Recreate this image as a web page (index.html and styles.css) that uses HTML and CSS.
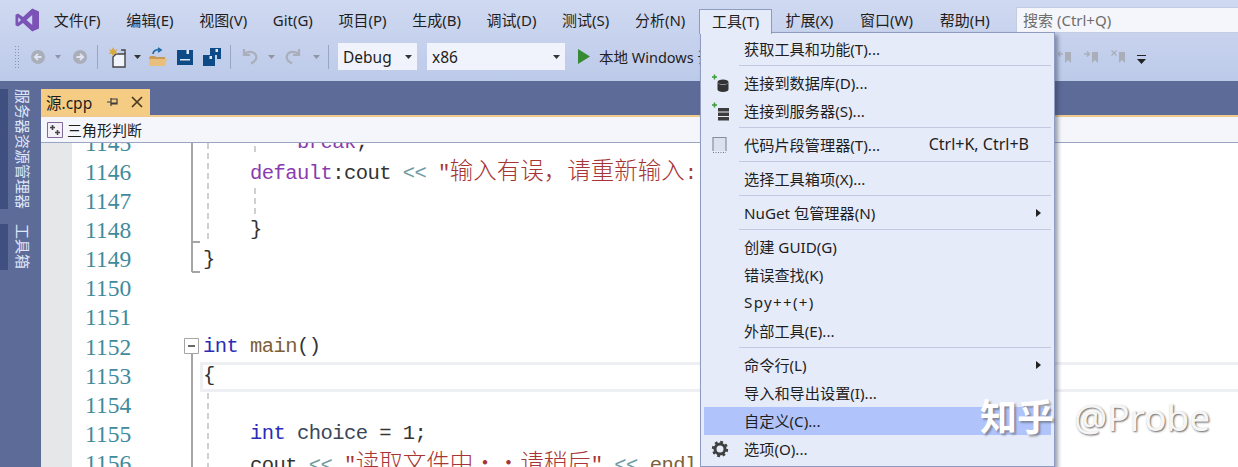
FILE: index.html
```html
<!DOCTYPE html>
<html lang="zh-CN">
<head>
<meta charset="utf-8">
<title>Visual Studio</title>
<link rel="stylesheet" href="styles.css">
</head>
<body>
<div class="app">
  <div class="chrome">
    <header class="menubar">
      <svg class="logo" width="24" height="24" viewBox="0 0 24 24"><path fill="#7b52b5" fill-rule="evenodd" d="M17.2 0.500 L24 3.600 V20.400 L17.200 23.500 L8 14.900 L3 18.600 L0.500 17.300 V6.700 L3 5.400 L8 9.100 Z M17.200 7 L11.600 12 L17.200 17 Z M3.200 9.200 V14.800 L6 12 Z"/></svg>
      <nav class="menus">
        <span class="menu">文件(F)</span>
        <span class="menu">编辑(E)</span>
        <span class="menu">视图(V)</span>
        <span class="menu">Git(G)</span>
        <span class="menu">项目(P)</span>
        <span class="menu">生成(B)</span>
        <span class="menu">调试(D)</span>
        <span class="menu">测试(S)</span>
        <span class="menu">分析(N)</span>
        <span class="menu menu-active">工具(T)</span>
        <span class="menu">扩展(X)</span>
        <span class="menu">窗口(W)</span>
        <span class="menu">帮助(H)</span>
      </nav>
      <div class="search">搜索 (Ctrl+Q)</div>
    </header>
    <div class="toolbar">
      <span class="grip"></span>
      <svg class="m9" width="16" height="16" viewBox="0 0 16 16"><circle cx="8" cy="8" r="7" fill="#a9aeb9"/><path d="M11.500 8H5M8 4.800 4.800 8 8 11.200" fill="none" stroke="#dfe5f4" stroke-width="1.800"/></svg>
      <svg class="m9" width="6" height="4" viewBox="0 0 6 4"><path d="M0 0h6L3 4z" fill="#8f95a5"/></svg>
      <svg class="m11" width="16" height="16" viewBox="0 0 16 16"><circle cx="8" cy="8" r="7" fill="#a9aeb9"/><path d="M4.500 8H11M8 4.800 11.200 8 8 11.200" fill="none" stroke="#dfe5f4" stroke-width="1.800"/></svg>
      <span class="tsep m9"></span>
      <svg class="m10" width="20" height="22" viewBox="0 0 20 22"><path d="M8 8h9v13H5V11z" fill="#f2f4fb" stroke="#444" stroke-width="1.400"/><path d="M5 1l1.500 3L10 3 7.600 5.600 10 8 6.600 7.400 5 10.500 3.600 7.400 0.500 8 2.800 5.600 0.700 3l3.100 1z" fill="#d9a93f"/><path d="M13 4h4v4" fill="none" stroke="#444" stroke-width="1.400"/></svg>
      <svg class="m6" width="7" height="4" viewBox="0 0 7 4"><path d="M0 0h7L3.500 4z" fill="#333"/></svg>
      <svg class="m7" width="20" height="20" viewBox="0 0 20 20"><path d="M1 10h6l1 2h11l-2 7H1z" fill="#e9bf7e"/><path d="M2 9h5l1 1h9v2H1z" fill="#c99a56"/><path d="M5 7c0-3 3-5 7-4M10 1l3 2-3 2" fill="none" stroke="#1f6aa8" stroke-width="1.600"/></svg>
      <svg class="m9" width="16" height="16" viewBox="0 0 16 16"><path d="M0 1h16v15H0z" fill="#0e4a86"/><path d="M9.500 1h2.500v4H9.500zM3 10h10v1.500H3z" fill="#dfe6f6"/></svg>
      <svg class="m10" width="18" height="18" viewBox="0 0 18 18"><path d="M7 0h11v11H14V7H7z" fill="#0e4a86"/><path d="M12.500 1h2.500v3h-2.500z" fill="#dfe6f6"/><path d="M0 7h12v11H0z" fill="#0e4a86"/><path d="M6.500 8h2.500v3H6.500z" fill="#dfe6f6"/></svg>
      <span class="tsep m9"></span>
      <svg class="m10" width="17" height="17" viewBox="0 0 17 17"><path d="M3 1v6h6M3.500 6.500C6 3 13 2.500 15 7.500c1 3-1 6-5 8" fill="none" stroke="#a9aeb9" stroke-width="2.200"/></svg>
      <svg class="m10" width="7" height="4" viewBox="0 0 7 4"><path d="M0 0h7L3.500 4z" fill="#8f95a5"/></svg>
      <svg class="m10" width="17" height="17" viewBox="0 0 17 17"><path d="M14 1v6H8M13.500 6.500C11 3 4 2.500 2 7.500c-1 3 1 6 5 8" fill="none" stroke="#a9aeb9" stroke-width="2.200"/></svg>
      <svg class="m11" width="7" height="4" viewBox="0 0 7 4"><path d="M0 0h7L3.500 4z" fill="#8f95a5"/></svg>
      <span class="tsep m8"></span>
      <div class="combo combo-config m9"><span>Debug</span><svg width="7" height="4" viewBox="0 0 7 4"><path d="M0 0h7L3.500 4z" fill="#333"/></svg></div>
      <div class="combo combo-platform m10"><span>x86</span><svg width="7" height="4" viewBox="0 0 7 4"><path d="M0 0h7L3.500 4z" fill="#333"/></svg></div>
      <svg class="m13" width="12" height="15" viewBox="0 0 12 15"><path d="M0 0l12 7.500L0 15z" fill="#388a34"/></svg>
      <span class="run-label m9">本地 Windows 调试器</span>
      <div class="bookmarks">
        <svg width="14" height="14" viewBox="0 0 14 14"><path d="M7 2h6v11l-3-3-3 3z" fill="#a9aeb9"/><path d="M5 4H0M2.500 1.500 0 4l2.500 2.500" fill="none" stroke="#a9aeb9" stroke-width="1.300"/></svg>
        <svg class="m12" width="15" height="14" viewBox="0 0 15 14"><path d="M8 2h6v11l-3-3-3 3z" fill="#a9aeb9"/><path d="M0 4h5M3 1.500 5.500 4 3 6.500" fill="none" stroke="#a9aeb9" stroke-width="1.300"/></svg>
        <svg class="m12" width="15" height="14" viewBox="0 0 15 14"><path d="M8 2h6v11l-3-3-3 3z" fill="#a9aeb9"/><path d="M0.500 0.500l5 5M5.500 0.500l-5 5" fill="none" stroke="#a9aeb9" stroke-width="1.200"/></svg>
        <svg class="overflow-btn" width="9" height="9" viewBox="0 0 9 9"><path d="M0 0.500h9" stroke="#222" stroke-width="1"/><path d="M0 4h9L4.500 9z" fill="#222"/></svg>
      </div>
    </div>
  </div>

  <div class="workspace">
    <aside class="sidebar">
      <div class="sidetab sidetab-server">服务器资源管理器</div>
      <div class="sidetab sidetab-tools">工具箱</div>
    </aside>
    <main class="docwell">
      <div class="tabstrip">
        <div class="doctab">
          <span class="doctab-name">源.cpp</span>
          <svg class="pin" width="12" height="10" viewBox="0 0 12 10"><path d="M0 5h4M4 1v8M4 2h6v5H4M4 6h6" fill="none" stroke="#3d3d3d" stroke-width="1.200"/></svg>
          <svg class="close" width="12" height="12" viewBox="0 0 12 12"><path d="M1 1l10 10M11 1L1 11" stroke="#4a3a20" stroke-width="1.700"/></svg>
        </div>
      </div>
      <div class="navbar">
        <svg width="16" height="16" viewBox="0 0 16 16"><path d="M0.500 0.500h15v15H0.500z" fill="#f4f0f8" stroke="#7f6a98"/><path d="M3 5.500h5M5.500 3v5" stroke="#444" stroke-width="1.600"/><path d="M8 10.500h5M10.500 8v5" stroke="#444" stroke-width="1.600"/></svg>
        <span>三角形判断</span>
      </div>
      <div class="editor">
        <div class="gutter"></div>
        <div class="lines">
          <div class="line"><span class="ln">1145</span><code class="code">        <i class="kw2">break</i>;</code></div>
          <div class="line"><span class="ln">1146</span><code class="code">    <i class="kw2">default</i>:cout <i class="op">&lt;&lt;</i> <i class="str">"<b>输入有误，请重新输入</b>:</i></code></div>
          <div class="line"><span class="ln">1147</span></div>
          <div class="line"><span class="ln">1148</span><code class="code">    }</code></div>
          <div class="line"><span class="ln">1149</span><code class="code">}</code></div>
          <div class="line"><span class="ln">1150</span></div>
          <div class="line"><span class="ln">1151</span></div>
          <div class="line"><span class="ln">1152</span><code class="code"><i class="kw">int</i> <i class="fn">main</i>()</code></div>
          <div class="line line-current"><span class="ln">1153</span><code class="code">{</code></div>
          <div class="line"><span class="ln">1154</span></div>
          <div class="line"><span class="ln">1155</span><code class="code">    <i class="kw">int</i> <i class="var">choice</i> = 1;</code></div>
          <div class="line"><span class="ln">1156</span><code class="code">    cout <i class="op">&lt;&lt;</i> <i class="str">"<b>读取文件中・・请稍后</b>"</i> <i class="op">&lt;&lt;</i> <i class="fn">endl</i></code></div>
        </div>
        <svg class="outlining" width="70" height="324" viewBox="0 0 70 324">
          <path d="M1 0V129M1 99H9M1 129H9M1 211V324" fill="none" stroke="#a5a5a5" stroke-width="2"/>
          <path d="M17 0V100M17 250V324M64 3V11M64 45V72" fill="none" stroke="#cfcfcf" stroke-width="2" stroke-dasharray="6 4"/>
          <path d="M-6.500 195.500h14v15h-14z" fill="#fff" stroke="#a5a5a5"/>
          <path d="M-3 203h7" stroke="#444" stroke-width="1.600"/>
        </svg>
      </div>
    </main>
  </div>

  <section class="dropdown">
    <div class="item"><span>获取工具和功能(T)...</span></div>
    <div class="msep"></div>
    <div class="item">
      <svg class="micon" width="22" height="20" viewBox="0 0 22 20"><path d="M3 4h5M5.500 1.500v5" stroke="#3f9a3a" stroke-width="1.500"/><ellipse cx="14" cy="9" rx="5.500" ry="2.500" fill="#333"/><path d="M8.500 9.500v7c0 1.500 2.500 2.500 5.500 2.500s5.500-1 5.500-2.500v-7c-1 1.500-3 2.500-5.500 2.500s-4.500-1-5.500-2.500z" fill="#333"/></svg>
      <span>连接到数据库(D)...</span>
    </div>
    <div class="item">
      <svg class="micon" width="22" height="20" viewBox="0 0 22 20"><path d="M3 4h5M5.500 1.500v5" stroke="#3f9a3a" stroke-width="1.500"/><path d="M9 7h11v3.500H9zM9 11.500h11V15H9zM9 16h11v3.500H9z" fill="#3c3c3c"/></svg>
      <span>连接到服务器(S)...</span>
    </div>
    <div class="msep"></div>
    <div class="item">
      <svg class="micon" width="22" height="18" viewBox="0 0 22 18"><path d="M4 15V1.500h13V15" fill="#dde1ee" stroke="#8a8f9f" stroke-width="1.200"/><path d="M4 16.500h13" stroke="#6f7485" stroke-dasharray="1 1.500"/></svg>
      <span>代码片段管理器(T)...</span><span class="shortcut">Ctrl+K, Ctrl+B</span>
    </div>
    <div class="msep"></div>
    <div class="item"><span>选择工具箱项(X)...</span></div>
    <div class="msep"></div>
    <div class="item"><span>NuGet 包管理器(N)</span><i class="arrow"></i></div>
    <div class="msep"></div>
    <div class="item"><span>创建 GUID(G)</span></div>
    <div class="item"><span>错误查找(K)</span></div>
    <div class="item"><span class="spy">Spy++(+)</span></div>
    <div class="item"><span>外部工具(E)...</span></div>
    <div class="msep"></div>
    <div class="item"><span>命令行(L)</span><i class="arrow"></i></div>
    <div class="item"><span>导入和导出设置(I)...</span></div>
    <div class="item item-hover"><span>自定义(C)...</span></div>
    <div class="item">
      <svg class="micon" width="22" height="18" viewBox="0 0 22 18"><circle cx="11" cy="9" r="5" fill="none" stroke="#404040" stroke-width="3"/><circle cx="11" cy="9" r="7" fill="none" stroke="#404040" stroke-width="2.400" stroke-dasharray="2.750 2.750"/></svg>
      <span>选项(O)...</span>
    </div>
  </section>

  <div class="watermark"><b>知乎</b><span>@Probe</span></div>
</div>
</body>
</html>
```
FILE: styles.css
```css
* { box-sizing: border-box; }
html, body { margin: 0; padding: 0; }
body {
  width: 1238px;
  height: 467px;
  overflow: hidden;
  font-family: "Noto Sans", "Noto Sans CJK SC", sans-serif;
  font-size: 15px;
  color: #1e1e1e;
}
svg { display: block; flex: none; }
.app {
  position: relative;
  width: 1238px;
  height: 467px;
  display: flex;
  flex-direction: column;
  overflow: hidden;
  background: #5d6b99;
}
.chrome { height: 81px; flex: none; background: linear-gradient(#d0d9f1, #bccae9); }

.menubar { height: 36px; display: flex; align-items: center; padding-left: 15px; }
.logo { margin-top: 4px; }
.menus { display: flex; align-items: stretch; margin-left: 2px; height: 24px; margin-top: 6px; width: 975px; }
.menu { padding: 0 12.800px; line-height: 22px; white-space: nowrap; }
.menu-active {
  position: relative;
  z-index: 3;
  height: 25px;
  background: #e6ebfa;
  border: 1px solid #8f9cc0;
  border-bottom: 0;
  padding: 0 11.800px;
  margin-left: 1px;
}
.menu-active ~ .menu { padding: 0 13.400px; }
.search {
  width: 222px;
  height: 26px;
  margin-top: 4px;
  padding-left: 6px;
  line-height: 25px;
  background: #f5f6fb;
  border: 1px solid #c4cce2;
  border-right: 0;
  color: #6d6d6d;
  white-space: nowrap;
}

.toolbar { height: 45px; display: flex; align-items: center; padding: 0 92px 4px 14px; }
.grip {
  width: 7px;
  height: 23px;
  background-image: radial-gradient(#8d94a8 0.800px, transparent 1px);
  background-size: 3px 3px;
}
.tsep { width: 1px; height: 24px; background: #9aa5c4; flex: none; }
.m6 { margin-left: 6px; }
.m7 { margin-left: 7px; }
.m8 { margin-left: 8px; }
.m9 { margin-left: 9px; }
.m10 { margin-left: 10px; }
.m11 { margin-left: 11px; }
.m12 { margin-left: 12px; }
.m13 { margin-left: 13px; }
.overflow-btn { margin-left: 11px; margin-top: 5px; }
.combo {
  height: 27px;
  flex: none;
  display: flex;
  align-items: center;
  justify-content: space-between;
  padding: 0 5px;
  background: #f0f3fb;
  font-size: 15.500px;
}
.combo-config { width: 79px; }
.combo-platform { width: 138px; }
.run-label { flex: 1; min-width: 0; overflow: hidden; white-space: nowrap; font-size: 14.500px; }
.bookmarks { display: flex; align-items: center; flex: none; margin-left: 300px; }

.workspace { flex: 1; min-height: 0; display: flex; }
.sidebar { width: 41px; flex: none; display: flex; flex-direction: column; gap: 15px; padding-top: 8px; }
.sidetab {
  writing-mode: vertical-rl;
  text-orientation: sideways;
  width: 100%;
  padding-right: 10px;
  border-left: 8px solid #3f4f7f;
  color: #dfe6fa;
  font-size: 15px;
  line-height: 16px;
  white-space: nowrap;
}
.sidetab-server { height: 120px; }
.sidetab-tools { height: 46px; }

.docwell { flex: 1; min-width: 0; display: flex; flex-direction: column; }
.tabstrip { height: 36px; flex: none; padding-top: 8px; border-bottom: 2px solid #f0c98c; }
.doctab {
  width: 109px;
  height: 26px;
  display: flex;
  align-items: center;
  padding-left: 5px;
  background: #f5cc84;
  font-size: 15.500px;
}
.doctab-name { width: 61px; }
.close { margin-left: 12px; }
.navbar {
  height: 26px;
  flex: none;
  display: flex;
  align-items: center;
  gap: 4px;
  padding-left: 6px;
  background: #f5f6fb;
  border-bottom: 1px solid #9aa5c4;
  font-size: 15px;
}
.editor { position: relative; flex: 1; min-height: 0; overflow: hidden; background: #fff; }
.gutter { position: absolute; left: 0; top: 0; bottom: 0; width: 31px; background: #e6e7e8; }
.lines { position: relative; margin-top: -14.500px; }
.line { height: 29.150px; display: flex; align-items: center; font-size: 23.500px; white-space: pre; }
.ln {
  width: 162px;
  flex: none;
  padding-left: 44px;
  font-family: "Liberation Serif", serif;
  color: #3f8a9c;
}
.code {
  font-family: "Liberation Mono", "Noto Sans CJK SC", monospace;
  font-size: 20.500px;
  line-height: 24px;
  letter-spacing: -0.550px;
  color: #333;
}
.code i { font-style: normal; }
.code b {
  font-weight: 300;
  font-size: 23.500px;
  line-height: 1;
  letter-spacing: 0;
  font-family: "Noto Sans CJK SC", sans-serif;
}
.kw { color: #2a2ab8; }
.kw2 { color: #8a3bb0; }
.fn { color: #7d6038; }
.var { color: #3a4658; }
.op { color: #6f9aa3; }
.str { color: #a83535; }
.line-current { position: relative; }
.line-current::after {
  content: "";
  position: absolute;
  left: 159px;
  right: 0;
  top: 0;
  bottom: -1px;
  border: 3px solid #eeeff2;
  border-right: 0;
}
.outlining { position: absolute; left: 150px; top: 0; overflow: visible; }

.dropdown {
  position: absolute;
  left: 700px;
  top: 32px;
  width: 355px;
  height: 435px;
  z-index: 2;
  padding: 2px 3px;
  background: #e6ebfa;
  border: 1px solid #8f9cc0;
  box-shadow: 3px 3px 4px rgba(40, 50, 80, 0.45);
  font-size: 15.200px;
}
.item { position: relative; height: 28px; display: flex; align-items: center; padding: 0 22px 3px 40px; white-space: nowrap; }
.item-hover { background: #b0c4fb; }
.spy { letter-spacing: 1.300px; }
.micon { position: absolute; left: 5px; top: 50%; transform: translateY(-50%); }
.shortcut { margin-left: auto; font-size: 16px; }
.arrow {
  position: absolute;
  right: 10px;
  top: 50%;
  margin-top: -4px;
  border-left: 5px solid #222;
  border-top: 4px solid transparent;
  border-bottom: 4px solid transparent;
}
.msep { height: 1px; margin: 2px 0 3px 35px; background: #c2c9e0; }

.watermark {
  position: absolute;
  left: 980px;
  top: 394px;
  z-index: 4;
  font-size: 37px;
  line-height: 46px;
  white-space: nowrap;
  color: #fff;
  text-shadow: 2px 2px 2px rgba(90, 90, 90, 0.55);
}
.watermark b { font-weight: 700; }
.watermark span { margin-left: 20px; color: #f6f6f6; text-shadow: 1px 1px 2px rgba(60, 60, 60, 0.8); }
```
